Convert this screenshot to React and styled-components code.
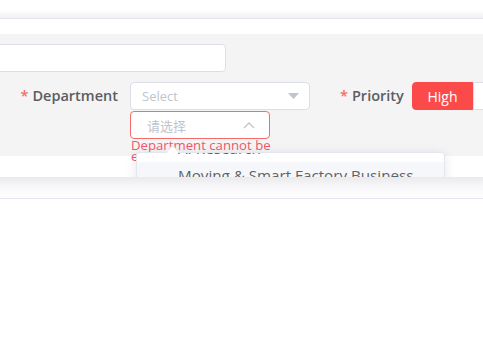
import React from 'react'
import styled, { createGlobalStyle } from 'styled-components'

const GlobalStyle = createGlobalStyle`
  html, body {
    margin: 0;
    padding: 0;
    background: #fff;
  }
  body {
    font-family: "Open Sans", "Noto Sans CJK SC", sans-serif;
  }
`

const Page = styled.div`
  width: 483px;
  height: 339px;
  overflow: hidden;
  background: #fff;
`

const TopBar = styled.div`
  height: 18px;
  background: linear-gradient(to bottom, #fff 55%, #f1f1f4 100%);
  border-bottom: 1px solid #e3e5ef;
`

const Viewport = styled.div`
  position: relative;
  height: 158px;
  overflow: hidden;
  padding-top: 15px;
  box-sizing: border-box;
`

const Panel = styled.div`
  background: #f4f4f4;
  height: 122px;
  padding-top: 10px;
  box-sizing: border-box;
`

const TextInput = styled.div`
  margin-left: -60px;
  width: 286px;
  height: 28px;
  box-sizing: border-box;
  background: #fff;
  border: 1px solid #dcdfe6;
  border-radius: 4px;
`

const FormRow = styled.div`
  display: flex;
  align-items: flex-start;
  margin-top: 10px;
`

const Label = styled.label`
  width: ${({ $width }) => $width}px;
  flex: none;
  box-sizing: border-box;
  padding-right: 12px;
  height: 28px;
  line-height: 28px;
  text-align: right;
  font-size: 14.5px;
  font-weight: 600;
  color: #5b5d63;
  white-space: nowrap;
  &::before {
    content: '*';
    color: #f56c6c;
    margin-right: 4px;
  }
`

const Field = styled.div`
  display: flex;
  flex-direction: column;
  gap: 1px;
`

const SelectBox = styled.div`
  width: ${({ $width }) => $width}px;
  height: 28px;
  box-sizing: border-box;
  display: flex;
  align-items: center;
  justify-content: space-between;
  padding: ${({ $error }) => ($error ? '0 14px 0 16px' : '0 10px 0 11px')};
  background: #fff;
  border: 1px solid ${({ $error }) => ($error ? '#f56c6c' : '#dcdfe6')};
  border-radius: 4px;
  font-size: 13px;
  color: #c0c4cc;
`

const ErrorText = styled.div`
  width: 142px;
  font-size: 13.2px;
  line-height: 11px;
  color: #f5566c;
  margin-top: 0;
  padding-left: 1px;
`

const PriorityItem = styled.div`
  display: flex;
  margin-left: 30px;
`

const ButtonGroup = styled.div`
  display: flex;
`

const OptionButton = styled.button`
  height: 28px;
  width: ${({ $width }) => $width}px;
  flex: none;
  border: 1px solid ${({ $active }) => ($active ? '#fa4a4a' : '#dcdfe6')};
  background: ${({ $active }) => ($active ? '#fa4a4a' : '#fff')};
  color: ${({ $active }) => ($active ? '#fff' : '#606266')};
  font-family: inherit;
  font-size: 14px;
  padding: 0;
  border-radius: ${({ $first }) => ($first ? '4px 0 0 4px' : '0')};
`

const Dropdown = styled.div`
  position: absolute;
  left: 136px;
  top: 133px;
  width: 307px;
  height: 120px;
  background: #fff;
  border: 1px solid #e4e7ed;
  border-radius: 4px;
  box-shadow: 0 2px 12px rgba(0, 0, 0, 0.1);
  &::before {
    content: '';
    position: absolute;
    left: 31px;
    top: -6px;
    width: 8px;
    height: 8px;
    background: #fff;
    border-left: 1px solid #e4e7ed;
    border-top: 1px solid #e4e7ed;
    transform: rotate(45deg);
  }
`

const ListClip = styled.div`
  overflow: hidden;
  height: 100%;
  border-radius: 4px;
`

const ItemList = styled.div`
  margin-top: -18px;
`

const Item = styled.div`
  height: 27px;
  line-height: 27px;
  padding-left: 41px;
  font-size: 15.2px;
  color: #606266;
  white-space: nowrap;
  background: ${({ $hover }) => ($hover ? '#f5f7fa' : 'transparent')};
`

const BottomBar = styled.div`
  height: 21px;
  background: linear-gradient(to bottom, #eaeaed 0%, #f7f7f9 45%, #fff 100%);
  border-bottom: 1px solid #e6e6f2;
`

const CaretDown = () => (
  <svg width="11" height="6" viewBox="0 0 11 6">
    <path d="M0 0 L11 0 L5.5 6 Z" fill="#c0c4cc" />
  </svg>
)

const ChevronUp = () => (
  <svg width="12" height="7" viewBox="0 0 12 7">
    <path d="M1 6 L6 1 L11 6" fill="none" stroke="#c0c4cc" strokeWidth="1.3" />
  </svg>
)

export default function App() {
  return (
    <Page>
      <GlobalStyle />
      <TopBar />
      <Viewport>
        <Panel>
          <TextInput />
          <FormRow>
            <Label $width={130}>Department</Label>
            <Field>
              <SelectBox $width={180}>
                <span>Select</span>
                <CaretDown />
              </SelectBox>
              <SelectBox $width={140} $error>
                <span>请选择</span>
                <ChevronUp />
              </SelectBox>
              <ErrorText>Department cannot be empty</ErrorText>
            </Field>
            <PriorityItem>
              <Label $width={72}>Priority</Label>
              <ButtonGroup>
                <OptionButton $width={61} $active $first>High</OptionButton>
                <OptionButton $width={90}>Medium</OptionButton>
              </ButtonGroup>
            </PriorityItem>
          </FormRow>
        </Panel>
        <Dropdown>
          <ListClip>
            <ItemList>
              <Item>AI Research</Item>
              <Item $hover>Moving &amp; Smart Factory Business</Item>
              <Item>Platform Engineering</Item>
            </ItemList>
          </ListClip>
        </Dropdown>
      </Viewport>
      <BottomBar />
    </Page>
  )
}
